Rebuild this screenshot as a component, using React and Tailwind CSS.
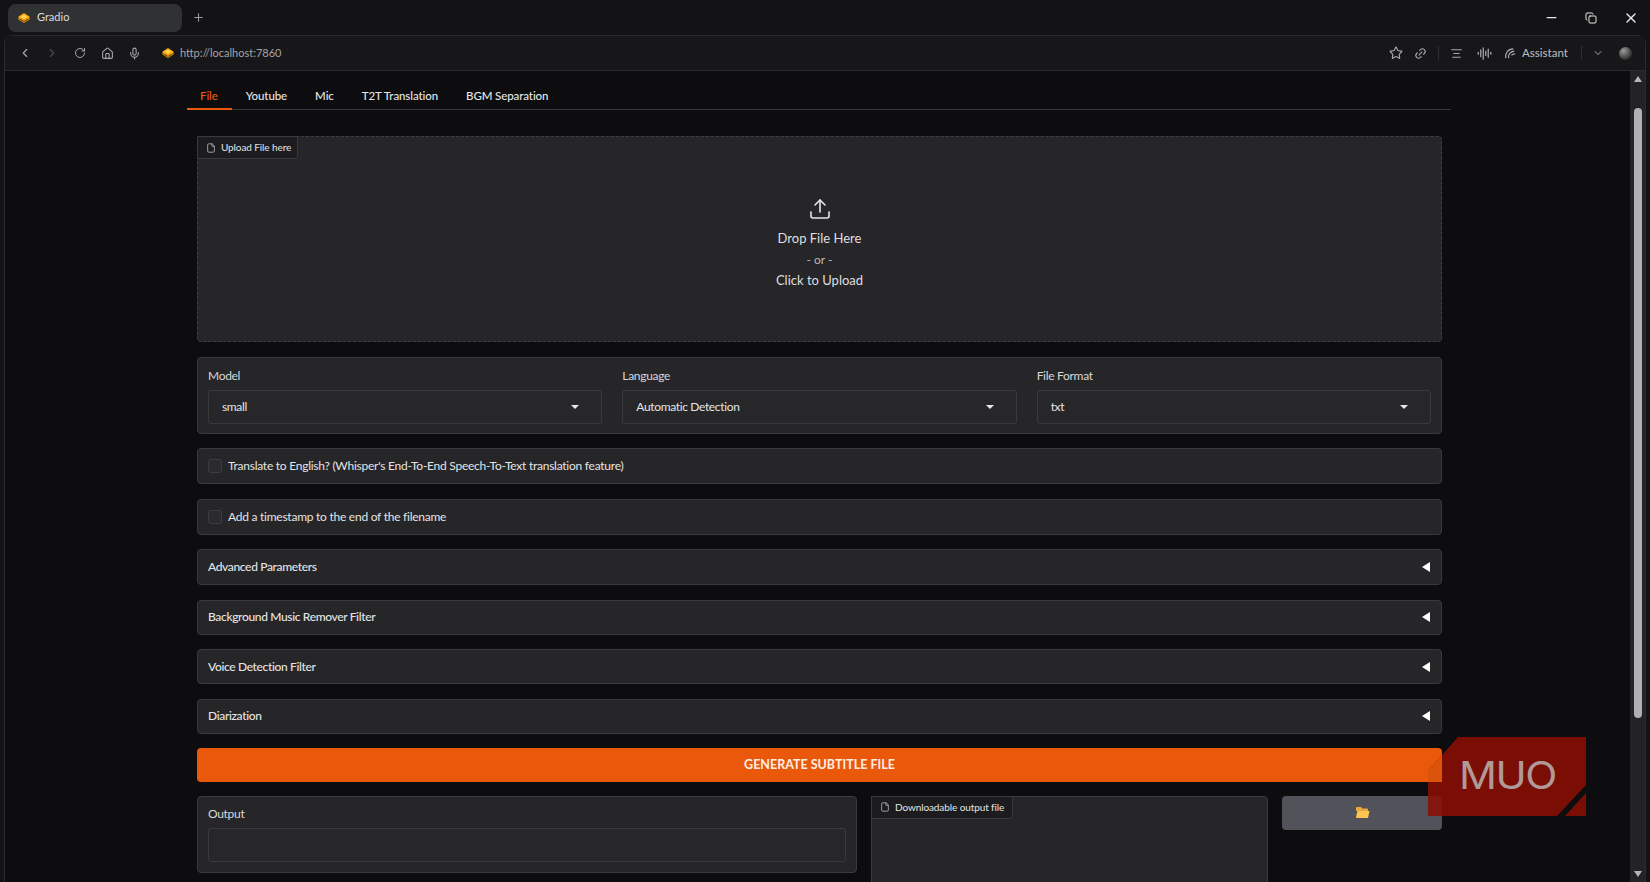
import React from 'react';
import { ChevronLeft, ChevronRight, RotateCw, Home, Mic, Star, Link2, Minus, X, ChevronDown, Plus, File, Upload, Copy, AudioLines, AlignCenter } from 'lucide-react';

const GradioLogo = ({ size = 12 }) => (
  <svg width={size} height={size} viewBox="0 0 24 24" fill="none">
    <path d="M12 2 L23 9 L23 15 L12 22 L1 15 L1 9 Z" fill="#f59e0b" />
    <path d="M4 9.5 L12 5 L20 9.5 L12 14 Z" fill="#fcd34d" />
    <path d="M3 14 L12 19 L21 14" stroke="#3a2500" strokeWidth="1.6" />
  </svg>
);

const tabs = ['File', 'Youtube', 'Mic', 'T2T Translation', 'BGM Separation'];

function Caret() {
  return <span className="w-0 h-0 border-l-[4px] border-r-[4px] border-t-[4px] border-l-transparent border-r-transparent border-t-[#e5e7eb]" />;
}

function Select({ label, value }) {
  return (
    <div className="flex-1 min-w-0">
      <div className="text-[12px] tracking-[-0.3px] leading-[18px] text-[#d8d8da] mb-[5px]">{label}</div>
      <div className="h-[34px] flex items-center justify-between pl-[13px] pr-[22px] rounded-[3px] border border-[#3a3a3c] bg-[#272729] text-[12px] tracking-[-0.35px] text-[#e4e4e6]">
        <span>{value}</span>
        <Caret />
      </div>
    </div>
  );
}

function CheckRow({ label }) {
  return (
    <div className="h-[36px] flex items-center px-[10px] gap-[6px] rounded-[4px] border border-[#3a3a3c] bg-[#262628]">
      <span className="w-[14px] h-[14px] rounded-[3px] border border-[#3d3d40] bg-[#2b2b2d]" />
      <span className="text-[12px] tracking-[-0.25px] text-[#e4e4e6]">{label}</span>
    </div>
  );
}

function Accordion({ label, height }) {
  return (
    <div className={`${height} flex items-center justify-between pl-[10px] pr-[11px] rounded-[4px] border border-[#3a3a3c] bg-[#262628]`}>
      <span className="text-[12px] tracking-[-0.35px] font-medium text-[#e4e4e6]">{label}</span>
      <span className="w-0 h-0 border-t-[5px] border-b-[5px] border-r-[8px] border-t-transparent border-b-transparent border-r-white" />
    </div>
  );
}

function FileTag({ label, width }) {
  return (
    <div className={`absolute top-[-1px] left-[-1px] h-[23px] ${width} flex items-center gap-[5px] pl-[8px] rounded-br-[4px] border border-[#3a3a3c] bg-[#1c1c1e] text-[10px] tracking-[-0.1px] whitespace-nowrap text-[#e4e4e6]`}>
      <File size={10} className="text-[#b5b5b8]" />
      <span>{label}</span>
    </div>
  );
}

export default function App() {
  return (
    <div className="relative w-[1650px] h-[882px] overflow-hidden flex flex-col bg-[#131315] text-white" style={{ fontFamily: 'Lato, sans-serif' }}>
      {/* tab strip */}
      <div className="h-[35px] shrink-0 flex items-center pl-[8px]">
        <div className="w-[174px] h-[28px] flex items-center gap-[7px] pl-[10px] rounded-[8px] bg-[#2f3133] text-[11px] text-[#dcdcde]">
          <GradioLogo />
          <span>Gradio</span>
        </div>
        <Plus size={13} className="ml-[10px] text-[#9a9a9c]" />
        <div className="ml-auto flex items-center gap-[26px] pr-[11px] text-[#e8e8e8]">
          <Minus size={15} />
          <Copy size={12} />
          <X size={16} />
        </div>
      </div>

      {/* window */}
      <div className="flex-1 min-h-0 ml-[4px] mr-[4px] flex flex-col rounded-t-[8px] border border-b-0 border-[#2b2b2d]">
        <div className="h-[35px] shrink-0 flex items-center pl-[13px] pr-[13px] border-b border-[#2b2b2d] bg-[#171719] text-[#a8a8aa]">
          <ChevronLeft size={14} />
          <ChevronRight size={14} className="ml-[13px] text-[#4b4b4d]" />
          <RotateCw size={12} className="ml-[15px]" />
          <Home size={13} className="ml-[15px]" />
          <Mic size={13} className="ml-[14px]" />
          <span className="ml-[21px]"><GradioLogo /></span>
          <span className="ml-[6px] text-[11px] text-[#a4a4a6]">http://localhost:7860</span>
          <div className="ml-auto flex items-center">
            <Star size={14} />
            <Link2 size={13} className="ml-[11px] -rotate-45" />
            <span className="ml-[11px] w-px h-[14px] bg-[#303032]" />
            <AlignCenter size={13} className="ml-[11px]" />
            <AudioLines size={15} className="ml-[14px]" />
            <svg width="13" height="13" viewBox="0 0 14 14" fill="none" stroke="#b0b0b2" strokeWidth="1.3" className="ml-[12px]">
              <path d="M2 12 C1 7 4 2 10 2" />
              <path d="M5 12 C4 8 7 5 11 4.5" />
              <path d="M8 9 C9 8 10.5 7.5 12 7.5" />
            </svg>
            <span className="ml-[5px] text-[11.5px] font-medium text-[#b4b4b6]">Assistant</span>
            <span className="ml-[13px] w-px h-[14px] bg-[#303032]" />
            <ChevronDown size={12} className="ml-[10px]" />
            <span className="ml-[15px] w-[13px] h-[13px] rounded-full bg-[radial-gradient(circle_at_35%_30%,#9a9a9a,#2a2a2a_75%)]" />
          </div>
        </div>

        <div className="flex-1 min-h-0 flex bg-[#0d0d0f]">
          {/* gradio page */}
          <div className="flex-1 min-w-0 overflow-hidden pl-[182px]">
            <div className="w-[1264px]">
              <div className="flex h-[39px] pt-[10px] border-b border-[#3a3a3c]">
                {tabs.map((t, i) => (
                  <div
                    key={t}
                    className={`h-[29px] text-[11.5px] tracking-[-0.1px] leading-[30px] font-medium ${i === 0 ? 'pl-[13px] pr-[14px] text-[#ea580c] border-b-2 border-[#ea580c] -mb-px' : 'px-[14px] text-[#e6e6e8]'}`}
                  >
                    {t}
                  </div>
                ))}
              </div>

              <div className="mt-[26px] ml-[10px] mr-[9px] flex flex-col gap-[14.5px]">
                <div className="relative h-[206px] flex flex-col items-center justify-center pt-[10px] rounded-[4px] border border-dashed border-[#3f3f42] bg-[#262628]">
                  <FileTag label="Upload File here" width="w-[101px]" />
                  <Upload size={24} strokeWidth={1.6} className="text-[#e8e8ea] mb-[7px]" />
                  <div className="text-[13px] leading-[21px] text-[#dedee0]">Drop File Here</div>
                  <div className="text-[12px] leading-[21px] text-[#b9b9bb]">- or -</div>
                  <div className="text-[13px] leading-[21px] text-[#dedee0]">Click to Upload</div>
                </div>

                <div className="h-[77px] flex gap-[20px] pl-[10px] pr-[10px] pt-[9px] rounded-[4px] border border-[#3a3a3c] bg-[#262628]">
                  <Select label="Model" value="small" />
                  <Select label="Language" value="Automatic Detection" />
                  <Select label="File Format" value="txt" />
                </div>

                <CheckRow label="Translate to English? (Whisper's End-To-End Speech-To-Text translation feature)" />
                <CheckRow label="Add a timestamp to the end of the filename" />
                <Accordion label="Advanced Parameters" height="h-[36px]" />
                <Accordion label="Background Music Remover Filter" height="h-[35px]" />
                <Accordion label="Voice Detection Filter" height="h-[35px]" />
                <Accordion label="Diarization" height="h-[35px]" />

                <div className="h-[34px] flex items-center justify-center rounded-[4px] bg-[#ea580c] text-[12.5px] font-bold text-[#fdeee4]">
                  GENERATE SUBTITLE FILE
                </div>

                <div className="-mt-[1px] flex gap-[14px] items-start">
                  <div className="w-[660px] h-[77px] px-[10px] pt-[8px] rounded-[4px] border border-[#3a3a3c] bg-[#262628]">
                    <div className="text-[12px] tracking-[-0.3px] leading-[18px] text-[#d8d8da] mb-[5px]">Output</div>
                    <div className="h-[34px] rounded-[3px] border border-[#3a3a3c] bg-[#272729]" />
                  </div>
                  <div className="relative w-[397px] h-[120px] rounded-[4px] border border-[#3a3a3c] bg-[#262628]">
                    <FileTag label="Downloadable output file" width="w-[142px]" />
                  </div>
                  <div className="flex-1 h-[34px] flex items-center justify-center rounded-[4px] bg-[#52525b]">
                    <svg width="15" height="13" viewBox="0 0 15 13">
                      <path d="M1 2 a1 1 0 0 1 1-1 h4 l1.5 1.5 H12 a1 1 0 0 1 1 1 V5 H1 Z" fill="#e8a93a" />
                      <path d="M1 11 L2.5 5 H14.5 L13 12 H2 a1 1 0 0 1-1-1 Z" fill="#fcc552" />
                    </svg>
                  </div>
                </div>
              </div>
            </div>
          </div>

          {/* scrollbar */}
          <div className="w-[15px] shrink-0 relative flex flex-col items-center bg-[#232325] py-[5px]">
            <span className="w-0 h-0 border-l-[4px] border-r-[4px] border-b-[6px] border-l-transparent border-r-transparent border-b-[#b5b5b8]" />
            <span className="mt-[26px] w-[8px] h-[610px] rounded-full bg-[#b0b0b3]" />
            <span className="mt-auto w-0 h-0 border-l-[4px] border-r-[4px] border-t-[6px] border-l-transparent border-r-transparent border-t-[#b5b5b8]" />
          </div>
        </div>
      </div>

      {/* MUO watermark */}
      <div className="absolute left-[1428px] top-[737px] w-[158px] h-[79px]">
        <svg width="158" height="79" viewBox="0 0 158 79" className="absolute inset-0">
          <polygon points="30,0 158,0 158,48 129,79 0,79 0,34" fill="#8a0f05" fillOpacity="0.88" />
          <polygon points="158,56 158,79 137,79" fill="#8a0f05" fillOpacity="0.88" />
          <polygon points="0,34 14,18 14,45 0,45" fill="#dc540c" />
        </svg>
        <div className="absolute left-[31px] top-[19px] text-[42px] leading-[44px] font-normal tracking-[-1.5px] text-[#b09a97] scale-y-[0.9] origin-top" style={{ fontFamily: 'Inter, sans-serif' }}>MUO</div>
      </div>
    </div>
  );
}
